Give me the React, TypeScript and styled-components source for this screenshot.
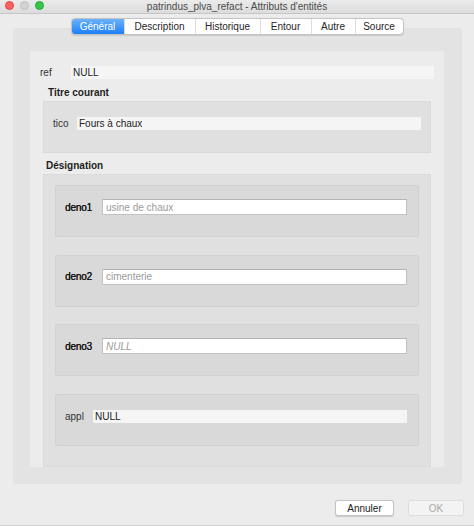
import React from "react";
import styled, { createGlobalStyle } from "styled-components";

const GlobalStyle = createGlobalStyle`
  html, body {
    margin: 0;
    padding: 0;
    background: #ececec;
  }
  body {
    font-family: "Liberation Sans", Arial, sans-serif;
    font-size: 10px;
    color: #2a2a2a;
  }
`;

const Window = styled.div`
  width: 474px;
  height: 526px;
  display: flex;
  flex-direction: column;
  background: #ececec;
  border-bottom: 1px solid #d2d2d2;
  box-sizing: border-box;
  overflow: hidden;
`;

const TitleBar = styled.div`
  position: relative;
  height: 13px;
  display: flex;
  align-items: center;
  justify-content: center;
  background: linear-gradient(#ebebeb, #dcdcdc);
  border-bottom: 1px solid #c6c6c6;
  color: #4a4a4a;
  font-size: 10px;
`;

const Lights = styled.div`
  position: absolute;
  left: 5px;
  top: 1px;
  display: flex;
  gap: 6px;
`;

const Light = styled.span<{ $color: string; $border: string }>`
  width: 9px;
  height: 9px;
  border-radius: 50%;
  background: ${(p) => p.$color};
  border: 0.5px solid ${(p) => p.$border};
  box-sizing: border-box;
`;

const Body = styled.div`
  flex: 1;
  display: flex;
  flex-direction: column;
  padding-top: 4px;
`;

const TabRow = styled.div`
  position: relative;
  z-index: 1;
  display: flex;
  justify-content: center;
  margin-bottom: -7px;
`;

const TabStrip = styled.div`
  display: flex;
  height: 17px;
  background: #ffffff;
  border: 1px solid #c4c4c4;
  border-radius: 4px;
  box-sizing: border-box;
  overflow: hidden;
  box-shadow: 0 0.5px 1px rgba(0, 0, 0, 0.12);
`;

const Tab = styled.div<{ $active?: boolean; $w: number }>`
  width: ${(p) => p.$w}px;
  display: flex;
  align-items: center;
  justify-content: center;
  font-size: 10px;
  color: ${(p) => (p.$active ? "#ffffff" : "#262626")};
  background: ${(p) =>
    p.$active ? "linear-gradient(#6db2fb, #1c7ff6)" : "transparent"};
  border-left: ${(p) => (p.$active ? "none" : "1px solid #dedede")};
  box-sizing: border-box;

  &:first-child {
    border-left: none;
  }
`;

const Panel = styled.div`
  height: 456px;
  margin: 0 12px 0 13px;
  padding: 22px 17px 16px 16px;
  background: #e3e3e3;
  border: 1px solid #e0e0e0;
  border-radius: 3px;
  box-sizing: border-box;
  display: flex;
`;

const Inner = styled.div`
  flex: 1;
  background: #ececec;
  display: flex;
  flex-direction: column;
  overflow: hidden;
`;

const FieldRow = styled.div<{ $h: number }>`
  display: flex;
  align-items: center;
  height: ${(p) => p.$h}px;
`;

const RefRow = styled(FieldRow)`
  margin-top: 15px;
  padding: 0 10px;
`;

const Label = styled.span<{ $w: number; $strong?: boolean }>`
  width: ${(p) => p.$w}px;
  flex-shrink: 0;
  font-size: 10px;
  color: ${(p) => (p.$strong ? "#141414" : "#333333")};
  letter-spacing: ${(p) => (p.$strong ? "-0.2px" : "0")};
  text-shadow: ${(p) => (p.$strong ? "0.3px 0 0 #141414" : "none")};
`;

const ReadField = styled.div<{ $h: number }>`
  flex: 1;
  height: ${(p) => p.$h}px;
  display: flex;
  align-items: center;
  padding-left: 2px;
  background: #f5f5f5;
  color: #222222;
  font-size: 10px;
`;

const InputField = styled.div<{ $italic?: boolean }>`
  flex: 1;
  height: 16px;
  display: flex;
  align-items: center;
  padding-left: 3px;
  background: #ffffff;
  border: 1px solid #c2c2c2;
  border-top-color: #b4b4b4;
  box-sizing: border-box;
  color: #9a9a9a;
  font-style: ${(p) => (p.$italic ? "italic" : "normal")};
  font-size: 10px;
`;

const SectionTitle = styled.div<{ $h: number; $pad: number }>`
  height: ${(p) => p.$h}px;
  padding-left: ${(p) => p.$pad}px;
  display: flex;
  align-items: flex-end;
  padding-bottom: 3px;
  box-sizing: border-box;
  font-weight: bold;
  font-size: 10px;
  color: #1e1e1e;
`;

const GroupBox = styled.div`
  margin: 0 13px;
  background: #e0e0e0;
  border: 1px solid #dadada;
  box-sizing: border-box;
`;

const TitreBox = styled(GroupBox)`
  height: 52px;
  padding: 15px 9px 0 9px;
`;

const DesignationBox = styled(GroupBox)`
  flex: 1;
  display: flex;
  flex-direction: column;
  gap: 17.5px;
  padding: 10px 11px 0 11px;
`;

const SubBox = styled.div<{ $top: number }>`
  height: 52px;
  flex-shrink: 0;
  padding: ${(p) => p.$top}px 11px 0 9px;
  background: #d9d9d9;
  border: 1px solid #d1d1d1;
  border-radius: 2px;
  box-sizing: border-box;
`;

const Footer = styled.div`
  display: flex;
  justify-content: flex-end;
  gap: 14px;
  padding: 16px 10px 0 0;
`;

const Button = styled.div<{ $disabled?: boolean }>`
  width: ${(p) => (p.$disabled ? 56 : 59)}px;
  height: 16px;
  display: flex;
  align-items: center;
  justify-content: center;
  font-size: 10px;
  border-radius: 3px;
  box-sizing: border-box;
  background: ${(p) => (p.$disabled ? "#f3f3f3" : "#ffffff")};
  color: ${(p) => (p.$disabled ? "#a8a8a8" : "#222222")};
  border: 1px solid ${(p) => (p.$disabled ? "#dcdcdc" : "#c4c4c4")};
  box-shadow: ${(p) =>
    p.$disabled ? "none" : "0 0.5px 1px rgba(0, 0, 0, 0.15)"};
`;

const tabs = [
  { name: "Général", w: 52 },
  { name: "Description", w: 71 },
  { name: "Historique", w: 65 },
  { name: "Entour", w: 51 },
  { name: "Autre", w: 44 },
  { name: "Source", w: 48 },
];

const denos = [
  { label: "deno1", value: "usine de chaux" },
  { label: "deno2", value: "cimenterie" },
  { label: "deno3", value: "NULL", italic: true },
];

export default function App() {
  return (
    <>
      <GlobalStyle />
      <Window>
        <TitleBar>
          <Lights>
            <Light $color="#fc605c" $border="#de4641" />
            <Light $color="#d2d2d2" $border="#c0c0c0" />
            <Light $color="#34c84a" $border="#25a83a" />
          </Lights>
          patrindus_plva_refact - Attributs d'entités
        </TitleBar>
        <Body>
          <TabRow>
            <TabStrip>
              {tabs.map((t, i) => (
                <Tab key={t.name} $w={t.w} $active={i === 0}>
                  {t.name}
                </Tab>
              ))}
            </TabStrip>
          </TabRow>
          <Panel>
            <Inner>
              <RefRow $h={13}>
                <Label $w={31}>ref</Label>
                <ReadField $h={13}>NULL</ReadField>
              </RefRow>
              <SectionTitle $h={22} $pad={18}>
                Titre courant
              </SectionTitle>
              <TitreBox>
                <FieldRow $h={13}>
                  <Label $w={24}>tico</Label>
                  <ReadField $h={13}>Fours à chaux</ReadField>
                </FieldRow>
              </TitreBox>
              <SectionTitle $h={21} $pad={16}>
                Désignation
              </SectionTitle>
              <DesignationBox>
                {denos.map((d) => (
                  <SubBox key={d.label} $top={13}>
                    <FieldRow $h={16}>
                      <Label $w={37} $strong>
                        {d.label}
                      </Label>
                      <InputField $italic={d.italic}>{d.value}</InputField>
                    </FieldRow>
                  </SubBox>
                ))}
                <SubBox $top={15}>
                  <FieldRow $h={13}>
                    <Label $w={28}>appl</Label>
                    <ReadField $h={13}>NULL</ReadField>
                  </FieldRow>
                </SubBox>
              </DesignationBox>
            </Inner>
          </Panel>
          <Footer>
            <Button>Annuler</Button>
            <Button $disabled>OK</Button>
          </Footer>
        </Body>
      </Window>
    </>
  );
}
